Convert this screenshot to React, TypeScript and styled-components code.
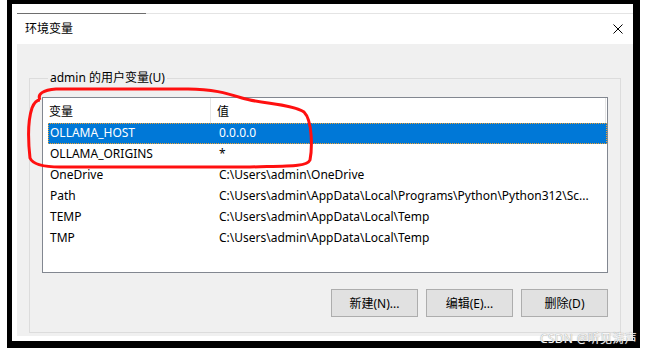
import React from 'react';
import styled, { createGlobalStyle } from 'styled-components';

const GlobalStyle = createGlobalStyle`
  html, body {
    margin: 0;
    padding: 0;
    background: #ffffff;
  }
  body {
    font-family: "Noto Sans", "Noto Sans CJK SC", sans-serif;
    font-size: 12px;
    color: #000;
  }
`;

const rows = [
  { name: 'OLLAMA_HOST', value: '0.0.0.0', selected: true },
  { name: 'OLLAMA_ORIGINS', value: '*' },
  { name: 'OneDrive', value: 'C:\\Users\\admin\\OneDrive' },
  { name: 'Path', value: 'C:\\Users\\admin\\AppData\\Local\\Programs\\Python\\Python312\\Sc...' },
  { name: 'TEMP', value: 'C:\\Users\\admin\\AppData\\Local\\Temp' },
  { name: 'TMP', value: 'C:\\Users\\admin\\AppData\\Local\\Temp' },
];

const App = () => {
  return (
    <>
      <GlobalStyle />
      <Page>
        <Frame>
          <Dialog>
            <TopEdge>
              <span className="dark" />
              <span className="light" />
            </TopEdge>
            <TitleBar>
              <span className="title">环境变量</span>
              <svg width="10" height="10" viewBox="0 0 10 10">
                <path d="M0.5 0.5 L9.5 9.5 M9.5 0.5 L0.5 9.5" stroke="#000" strokeWidth="1" fill="none" />
              </svg>
            </TitleBar>
            <Body>
              <GroupBox>
                <legend>admin 的用户变量(U)</legend>
                <ListBox>
                  <HeaderRow>
                    <HeaderCell $first>变量</HeaderCell>
                    <HeaderCell>值</HeaderCell>
                  </HeaderRow>
                  {rows.map((r) => (
                    <Row key={r.name} $selected={r.selected}>
                      <Cell $first>{r.name}</Cell>
                      <Cell>{r.value}</Cell>
                    </Row>
                  ))}
                </ListBox>
                <ButtonBar>
                  <Button>新建(N)...</Button>
                  <Button>编辑(E)...</Button>
                  <Button>删除(D)</Button>
                </ButtonBar>
              </GroupBox>
            </Body>
          </Dialog>
          <Watermark>CSDN @听见涛声</Watermark>
        </Frame>
        <Scribble width="649" height="351" viewBox="0 0 649 351">
          <path
            d="M40 100 C37 94 43 90 56 89 L188 89 C212 89 226 93 242 98 C262 104 292 104 304 112 C313 121 312 150 310 160 C307 167 288 166 250 167 L60 167 C45 167 33 165 30 158 C28 140 28 120 32 108 C34 103 37 100 40 100"
            stroke="#ff1010"
            strokeWidth="3"
            fill="none"
          />
        </Scribble>
      </Page>
    </>
  );
};

export default App;

const Page = styled.div`
  position: relative;
  width: 649px;
  height: 351px;
  overflow: hidden;
`;

const Frame = styled.div`
  position: relative;
  margin-left: 7px;
  width: 616px;
  height: 323px;
  border-style: solid;
  border-color: #000;
  border-width: 4px 7px 7px 5px;
  padding: 9px 0 5px 5px;
  box-sizing: content-box;
  display: flex;
  flex-direction: column;
`;

const Dialog = styled.div`
  width: 616px;
  height: 323px;
  display: flex;
  flex-direction: column;
  background: #f0f0f0;
`;

const TopEdge = styled.div`
  display: flex;
  height: 1px;
  .dark {
    width: 129px;
    background: #6e6e6e;
  }
  .light {
    flex: 1;
    background: #e4e4e4;
  }
`;

const TitleBar = styled.div`
  height: 30px;
  background: #fff;
  display: flex;
  align-items: center;
  justify-content: space-between;
  padding: 0 10px 0 8px;
  .title {
    line-height: 16px;
    margin-top: -1px;
  }
  svg {
    display: block;
    margin-top: -1px;
  }
`;

const Body = styled.div`
  flex: 1;
  padding: 26px 12px 3px 12px;
  display: flex;
`;

const GroupBox = styled.fieldset`
  flex: 1;
  margin: 0;
  padding: 0 12px 0 12px;
  border: 1px solid #dcdcdc;
  min-width: 0;
  legend {
    margin-left: 6px;
    padding: 0 2px;
    line-height: 16px;
  }
`;

const ListBox = styled.div`
  margin-top: 11px;
  height: 174px;
  border: 1px solid #828790;
  background: #fff;
  display: flex;
  flex-direction: column;
`;

const HeaderRow = styled.div`
  display: flex;
  height: 25px;
  align-items: center;
  border-right: 1px solid #e5e5e5;
  margin-right: 1px;
`;

const HeaderCell = styled.div<{ $first?: boolean }>`
  height: 100%;
  display: flex;
  align-items: center;
  width: ${({ $first }) => ($first ? '168px' : 'auto')};
  flex: ${({ $first }) => ($first ? 'none' : '1')};
  padding-left: ${({ $first }) => ($first ? '6px' : '6px')};
  box-sizing: border-box;
  border-right: ${({ $first }) => ($first ? '1px solid #e5e5e5' : 'none')};
`;

const Row = styled.div<{ $selected?: boolean }>`
  display: flex;
  height: 21px;
  align-items: center;
  margin-left: 5px;
  box-sizing: border-box;
  background: ${({ $selected }) => ($selected ? '#0078d7' : 'transparent')};
  color: ${({ $selected }) => ($selected ? '#fff' : '#000')};
  border: 1px dotted ${({ $selected }) => ($selected ? '#f0a030' : 'transparent')};
`;

const Cell = styled.div<{ $first?: boolean }>`
  width: ${({ $first }) => ($first ? '168px' : 'auto')};
  flex: ${({ $first }) => ($first ? 'none' : '1')};
  padding-left: 1px;
  white-space: nowrap;
  overflow: hidden;
  line-height: 16px;
  margin-top: -1px;
`;

const ButtonBar = styled.div`
  display: flex;
  justify-content: flex-end;
  gap: 8px;
  margin-top: 16px;
`;

const Button = styled.button`
  width: 87px;
  height: 28px;
  background: #e1e1e1;
  border: 1px solid #adadad;
  font-family: "Noto Sans", "Noto Sans CJK SC", sans-serif;
  font-size: 12px;
  color: #000;
  padding: 0;
  margin: 0;
`;

const Watermark = styled.span`
  position: absolute;
  right: -4px;
  bottom: -5px;
  font-size: 12px;
  line-height: 14px;
  color: #f6f6f6;
  text-shadow: 0 0 1px #707070;
  letter-spacing: 0.3px;
`;

const Scribble = styled.svg`
  position: absolute;
  top: 0;
  left: 0;
  pointer-events: none;
`;
